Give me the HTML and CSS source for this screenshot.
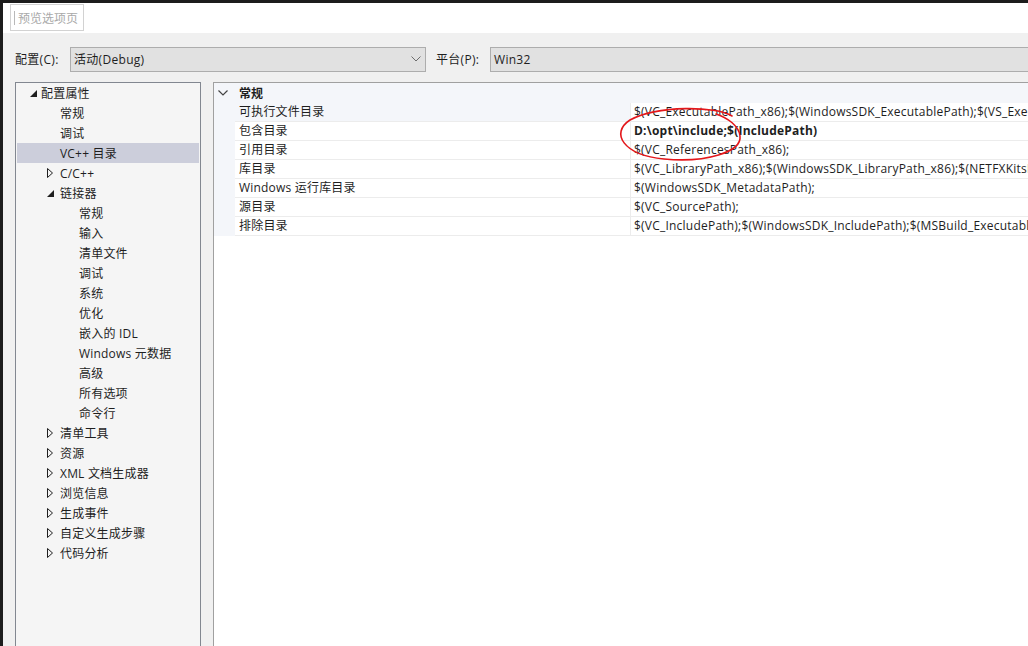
FILE: index.html
```html
<!DOCTYPE html>
<html lang="zh-CN">
<head>
<meta charset="utf-8">
<title>属性页</title>
<link rel="stylesheet" href="styles.css">
</head>
<body>
<div class="topedge"></div>
<div class="frame">
  <div class="leftedge"></div>
  <div class="window">
    <div class="titlebar">
      <div class="ghost"><span class="caret"></span><span>预览选项页</span></div>
    </div>
    <div class="configbar">
      <span class="label label-config">配置(C):</span>
      <div class="combo combo-config">
        <span>活动(Debug)</span>
        <svg class="chev" width="10" height="6" viewBox="0 0 10 6"><path d="M0.5 0.5 L5 5 L9.5 0.5" fill="none" stroke="#6d6d6d" stroke-width="1"/></svg>
      </div>
      <span class="label label-platform">平台(P):</span>
      <div class="combo combo-platform"><span>Win32</span></div>
    </div>
    <div class="main">
      <div class="tree">
        <div class="node l0"><span class="tog"><svg width="7" height="7" viewBox="0 0 7 7"><path d="M7 0 L7 7 L0 7 Z" fill="#1e1e1e"/></svg></span><span>配置属性</span></div>
        <div class="node l1"><span class="tog"></span><span>常规</span></div>
        <div class="node l1"><span class="tog"></span><span>调试</span></div>
        <div class="node l1 selected"><span class="tog"></span><span>VC++ 目录</span></div>
        <div class="node l1"><span class="tog"><svg class="col" width="7" height="10" viewBox="0 0 7 10"><path d="M0.5 0.5 L5.5 5 L0.5 9.5 Z" fill="none" stroke="#1e1e1e" stroke-width="1"/></svg></span><span>C/C++</span></div>
        <div class="node l1"><span class="tog"><svg width="7" height="7" viewBox="0 0 7 7"><path d="M7 0 L7 7 L0 7 Z" fill="#1e1e1e"/></svg></span><span>链接器</span></div>
        <div class="node l2"><span class="tog"></span><span>常规</span></div>
        <div class="node l2"><span class="tog"></span><span>输入</span></div>
        <div class="node l2"><span class="tog"></span><span>清单文件</span></div>
        <div class="node l2"><span class="tog"></span><span>调试</span></div>
        <div class="node l2"><span class="tog"></span><span>系统</span></div>
        <div class="node l2"><span class="tog"></span><span>优化</span></div>
        <div class="node l2"><span class="tog"></span><span>嵌入的 IDL</span></div>
        <div class="node l2"><span class="tog"></span><span>Windows 元数据</span></div>
        <div class="node l2"><span class="tog"></span><span>高级</span></div>
        <div class="node l2"><span class="tog"></span><span>所有选项</span></div>
        <div class="node l2"><span class="tog"></span><span>命令行</span></div>
        <div class="node l1"><span class="tog"><svg class="col" width="7" height="10" viewBox="0 0 7 10"><path d="M0.5 0.5 L5.5 5 L0.5 9.5 Z" fill="none" stroke="#1e1e1e" stroke-width="1"/></svg></span><span>清单工具</span></div>
        <div class="node l1"><span class="tog"><svg class="col" width="7" height="10" viewBox="0 0 7 10"><path d="M0.5 0.5 L5.5 5 L0.5 9.5 Z" fill="none" stroke="#1e1e1e" stroke-width="1"/></svg></span><span>资源</span></div>
        <div class="node l1"><span class="tog"><svg class="col" width="7" height="10" viewBox="0 0 7 10"><path d="M0.5 0.5 L5.5 5 L0.5 9.5 Z" fill="none" stroke="#1e1e1e" stroke-width="1"/></svg></span><span>XML 文档生成器</span></div>
        <div class="node l1"><span class="tog"><svg class="col" width="7" height="10" viewBox="0 0 7 10"><path d="M0.5 0.5 L5.5 5 L0.5 9.5 Z" fill="none" stroke="#1e1e1e" stroke-width="1"/></svg></span><span>浏览信息</span></div>
        <div class="node l1"><span class="tog"><svg class="col" width="7" height="10" viewBox="0 0 7 10"><path d="M0.5 0.5 L5.5 5 L0.5 9.5 Z" fill="none" stroke="#1e1e1e" stroke-width="1"/></svg></span><span>生成事件</span></div>
        <div class="node l1"><span class="tog"><svg class="col" width="7" height="10" viewBox="0 0 7 10"><path d="M0.5 0.5 L5.5 5 L0.5 9.5 Z" fill="none" stroke="#1e1e1e" stroke-width="1"/></svg></span><span>自定义生成步骤</span></div>
        <div class="node l1"><span class="tog"><svg class="col" width="7" height="10" viewBox="0 0 7 10"><path d="M0.5 0.5 L5.5 5 L0.5 9.5 Z" fill="none" stroke="#1e1e1e" stroke-width="1"/></svg></span><span>代码分析</span></div>
      </div>
      <div class="grid">
        <div class="cat">
          <span class="gut"><svg width="10" height="6" viewBox="0 0 10 6"><path d="M0.5 0.5 L5 5 L9.5 0.5" fill="none" stroke="#444" stroke-width="1.2"/></svg></span>
          <span class="cat-name">常规</span>
        </div>
        <div class="prow first"><span class="gut"></span><span class="pname">可执行文件目录</span><span class="pval">$(VC_ExecutablePath_x86);$(WindowsSDK_ExecutablePath);$(VS_Exec</span></div>
        <div class="prow"><span class="gut"></span><span class="pname">包含目录</span><span class="pval bold">D:\opt\include;$(IncludePath)</span></div>
        <div class="prow"><span class="gut"></span><span class="pname">引用目录</span><span class="pval">$(VC_ReferencesPath_x86);</span></div>
        <div class="prow"><span class="gut"></span><span class="pname">库目录</span><span class="pval">$(VC_LibraryPath_x86);$(WindowsSDK_LibraryPath_x86);$(NETFXKitsD</span></div>
        <div class="prow"><span class="gut"></span><span class="pname">Windows 运行库目录</span><span class="pval">$(WindowsSDK_MetadataPath);</span></div>
        <div class="prow"><span class="gut"></span><span class="pname">源目录</span><span class="pval">$(VC_SourcePath);</span></div>
        <div class="prow"><span class="gut"></span><span class="pname">排除目录</span><span class="pval">$(VC_IncludePath);$(WindowsSDK_IncludePath);$(MSBuild_Executable</span></div>
        <svg class="mark" width="130" height="60" viewBox="0 0 130 60">
          <path d="M114 10 C 98 0, 40 -1, 12 14 C -8 27, 5 49, 46 53 C 88 57, 124 46, 122 30 C 121 20, 110 12, 98 8" fill="none" stroke="#e3171b" stroke-width="1.6" stroke-linecap="round"/>
        </svg>
      </div>
    </div>
  </div>
</div>
</body>
</html>
```

FILE: styles.css
```css
* { box-sizing: border-box; }

html, body {
  margin: 0;
  padding: 0;
  width: 1028px;
  height: 646px;
  overflow: hidden;
  background: #f0f0f0;
  font-family: "Open Sans", "Noto Sans CJK SC", sans-serif;
  font-size: 12px;
  color: #1e1e1e;
}

.topedge {
  height: 3px;
  background: #1c1c1c;
}

.frame {
  display: flex;
  height: 643px;
}

.leftedge {
  width: 3px;
  flex: none;
  background: #1c1c1c;
}

.window {
  flex: 1;
  display: flex;
  flex-direction: column;
  min-width: 0;
  overflow: hidden;
}

.titlebar {
  height: 30px;
  flex: none;
  background: #ffffff;
  padding: 1px 0 0 7px;
}

.ghost {
  width: 74px;
  height: 27px;
  border: 1px solid #d2d2d2;
  display: flex;
  align-items: center;
  padding-left: 3px;
  gap: 3px;
  color: #a9a9a9;
  font-size: 12px;
  white-space: nowrap;
  overflow: hidden;
}

.caret {
  width: 1px;
  height: 14px;
  background: #b9b9b9;
  flex: none;
}

.configbar {
  height: 49px;
  flex: none;
  display: flex;
  align-items: center;
  padding-left: 12px;
  padding-top: 3px;
  white-space: nowrap;
  letter-spacing: 0.3px;
}

.label {
  flex: none;
}

.label-config {
  width: 55px;
}

.label-platform {
  width: 54px;
  margin-left: 10px;
}

.combo {
  height: 25px;
  background: #e1e1e1;
  border: 1px solid #adadad;
  display: flex;
  align-items: center;
  padding-left: 3px;
  flex: none;
}

.combo-config {
  width: 356px;
  justify-content: space-between;
  padding-right: 4px;
}

.combo-platform {
  width: 560px;
}

.main {
  flex: 1;
  display: flex;
  gap: 12px;
  padding-left: 12px;
  min-height: 0;
}

.tree {
  width: 186px;
  flex: none;
  height: 600px;
  background: #f5f5f5;
  border: 1px solid #828790;
  padding: 0 1px;
}

.node {
  height: 20px;
  display: flex;
  align-items: center;
  white-space: nowrap;
  letter-spacing: 0.2px;
}

.node.l0 { padding-left: 5px; }
.node.l1 { padding-left: 24px; }
.node.l2 { padding-left: 43px; }

.node.selected {
  background: #cccedb;
}

.tog {
  width: 19px;
  flex: none;
  display: flex;
  align-items: center;
  padding-left: 6px;
}

.node.l0 .tog { padding-left: 8px; }

.tog svg { display: block; }

.grid {
  flex: 1;
  position: relative;
  background: #ffffff;
  border-top: 1px solid #a0a0a0;
  border-left: 1px solid #a0a0a0;
  height: 600px;
  overflow: hidden;
}

.cat {
  height: 20px;
  display: flex;
  align-items: center;
  background: #f4f6fa;
}

.gut {
  width: 21px;
  flex: none;
  align-self: stretch;
  display: flex;
  align-items: center;
  padding-left: 4px;
  background: #f4f6fa;
}

.cat-name {
  font-weight: bold;
  padding-left: 4px;
}

.prow {
  height: 19px;
  display: flex;
  white-space: nowrap;
}

.pname {
  width: 395px;
  flex: none;
  padding-left: 4px;
  line-height: 18px;
  border-bottom: 1px solid #ececec;
  letter-spacing: 0.2px;
}

.prow.first .pname {
  background: #f4f6fa;
}

.pval {
  flex: 1;
  min-width: 0;
  overflow: hidden;
  padding-left: 3px;
  line-height: 18px;
  letter-spacing: 0.22px;
  border-left: 1px solid #ececec;
  border-bottom: 1px solid #ececec;
}

.bold { font-weight: bold; }

.mark {
  position: absolute;
  left: 404px;
  top: 23px;
}
```
